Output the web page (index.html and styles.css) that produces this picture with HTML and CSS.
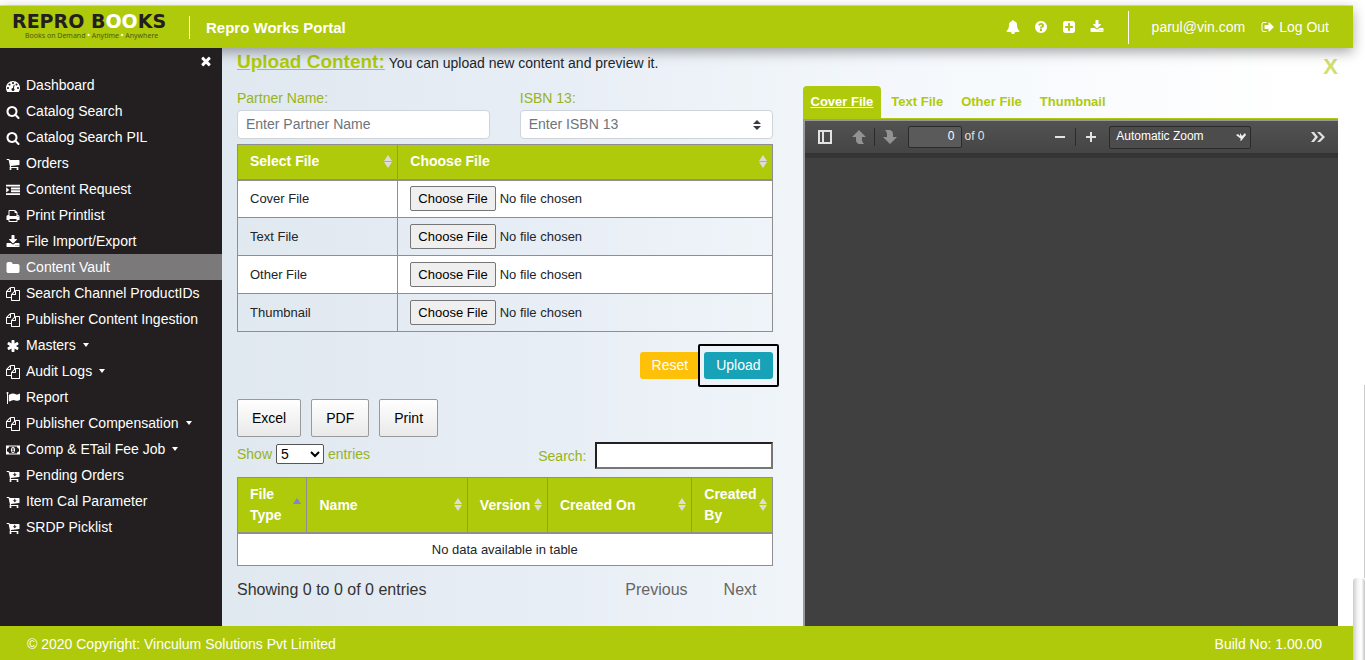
FILE: index.html
```html
<!DOCTYPE html>
<html lang="en">
<head>
<meta charset="UTF-8" />
<meta name="viewport" content="width=device-width, initial-scale=1" />
<title>Repro Works Portal</title>
<link rel="stylesheet" href="styles.css">
</head>
<body>
<svg class="sprite" aria-hidden="true">
  <symbol id="bell" viewBox="0 0 1792 1792"><path d="M1728 1408q0 52-38 90t-90 38h-448q0 106-75 181t-181 75-181-75-75-181h-448q-52 0-90-38t-38-90q50-42 91-88t85-119.500 74.500-158.500 50-206 19.500-260q0-152 117-282.500t307-158.500q-8-19-8-39 0-40 28-68t68-28 68 28 28 68q0 20-8 39 190 28 307 158.500t117 282.500q0 139 19.500 260t50 206 74.500 158.500 85 119.500 91 88z"/></symbol>
  <symbol id="question" viewBox="0 0 1792 1792"><path d="M1024 1376v-192q0-14-9-23t-23-9h-192q-14 0-23 9t-9 23v192q0 14 9 23t23 9h192q14 0 23-9t9-23zm256-672q0-88-55.500-163t-138.500-116-170-41q-243 0-371 213-15 24 8 42l132 100q7 6 19 6 16 0 25-12 53-68 86-92 34-24 86-24 48 0 85.500 26t37.500 59q0 38-20 61t-68 45q-63 28-115.500 86.500t-52.500 125.500v36q0 14 9 23t23 9h192q14 0 23-9t9-23q0-19 21.500-49.500t54.500-49.500q32-18 49-28.500t46-35 44.500-48 28-60.500 12.500-81zm384 192q0 209-103 385.500t-279.500 279.500-385.500 103-385.500-103-279.500-279.500-103-385.500 103-385.500 279.500-279.500 385.500-103 385.500 103 279.500 279.500 103 385.500z"/></symbol>
  <symbol id="plus" viewBox="0 0 1792 1792"><path d="M1408 960v-128q0-26-19-45t-45-19h-320v-320q0-26-19-45t-45-19h-128q-26 0-45 19t-19 45v320h-320q-26 0-45 19t-19 45v128q0 26 19 45t45 19h320v320q0 26 19 45t45 19h128q26 0 45-19t19-45v-320h320q26 0 45-19t19-45zm256-544v960q0 119-84.500 203.500t-203.500 84.500h-960q-119 0-203.500-84.500t-84.500-203.500v-960q0-119 84.500-203.500t203.500-84.500h960q119 0 203.500 84.500t84.500 203.500z"/></symbol>
  <symbol id="download" viewBox="0 0 1792 1792"><path d="M1344 1344q0-26-19-45t-45-19-45 19-19 45 19 45 45 19 45-19 19-45zm256 0q0-26-19-45t-45-19-45 19-19 45 19 45 45 19 45-19 19-45zm128-224v320q0 40-28 68t-68 28h-1472q-40 0-68-28t-28-68v-320q0-40 28-68t68-28h465l135 136q58 56 136 56t136-56l136-136h464q40 0 68 28t28 68zm-325-569q17 41-14 70l-448 448q-18 19-45 19t-45-19l-448-448q-31-29-14-70 17-39 59-39h256v-448q0-26 19-45t45-19h256q26 0 45 19t19 45v448h256q42 0 59 39z"/></symbol>
  <symbol id="signout" viewBox="0 0 1792 1792"><path d="M704 1440q0 4 1 20t.5 26.500-3 23.500-10 19.500-20.500 6.500h-320q-119 0-203.500-84.500t-84.500-203.500v-704q0-119 84.500-203.500t203.500-84.500h320q13 0 22.500 9.500t9.500 22.500q0 4 1 20t.5 26.500-3 23.500-10 19.500-20.500 6.500h-320q-66 0-113 47t-47 113v704q0 66 47 113t113 47h312l11.500 1 11.500 3 8 5.500 7 9 2 13.500zm928-544q0 26-19 45l-544 544q-19 19-45 19t-45-19-19-45v-288h-448q-26 0-45-19t-19-45v-384q0-26 19-45t45-19h448v-288q0-26 19-45t45-19 45 19l544 544q19 19 19 45z"/></symbol>
  <symbol id="times" viewBox="0 0 1792 1792"><path d="M1490 1322q0 40-28 68l-136 136q-28 28-68 28t-68-28l-294-294-294 294q-28 28-68 28t-68-28l-136-136q-28-28-28-68t28-68l294-294-294-294q-28-28-28-68t28-68l136-136q28-28 68-28t68 28l294 294 294-294q28-28 68-28t68 28l136 136q28 28 28 68t-28 68l-294 294 294 294q28 28 28 68z"/></symbol>
  <symbol id="dashboard" viewBox="0 0 1792 1792"><path d="M384 1152q0-53-37.500-90.500t-90.500-37.500-90.500 37.500-37.500 90.500 37.500 90.500 90.500 37.500 90.500-37.500 37.500-90.500zm192-448q0-53-37.500-90.500t-90.500-37.500-90.500 37.500-37.500 90.500 37.500 90.500 90.500 37.500 90.500-37.500 37.500-90.500zm428 481l101-382q6-26-7.500-48.500t-38.500-29.500-48 6.500-30 39.500l-101 382q-60 5-107 43.500t-63 98.500q-20 77 20 146t117 89 146-20 89-117q16-60-6-117t-72-91zm660-33q0-53-37.500-90.500t-90.500-37.500-90.500 37.500-37.500 90.500 37.500 90.500 90.500 37.500 90.500-37.500 37.500-90.500zm-640-640q0-53-37.500-90.500t-90.500-37.500-90.500 37.500-37.500 90.500 37.500 90.500 90.500 37.500 90.500-37.500 37.500-90.500zm448 192q0-53-37.500-90.500t-90.500-37.500-90.500 37.500-37.500 90.500 37.500 90.500 90.500 37.500 90.500-37.500 37.500-90.500zm320 448q0 261-141 483-19 29-54 29h-1402q-35 0-54-29-141-221-141-483 0-182 71-348t191-286 286-191 348-71 348 71 286 191 191 286 71 348z"/></symbol>
  <symbol id="search" viewBox="0 0 1792 1792"><path d="M1216 832q0-185-131.500-316.500t-316.500-131.500-316.500 131.500-131.500 316.500 131.500 316.500 316.500 131.500 316.500-131.500 131.500-316.500zm512 832q0 52-38 90t-90 38q-54 0-90-38l-343-342q-179 124-399 124-143 0-273.500-55.500t-225-150-150-225-55.500-273.500 55.500-273.500 150-225 225-150 273.500-55.500 273.500 55.500 225 150 150 225 55.500 273.500q0 220-124 399l343 343q37 37 37 90z"/></symbol>
  <symbol id="cart" viewBox="0 0 1792 1792"><path d="M704 1536q0 52-38 90t-90 38-90-38-38-90 38-90 90-38 90 38 38 90zm896 0q0 52-38 90t-90 38-90-38-38-90 38-90 90-38 90 38 38 90zm128-1088v512q0 24-16.500 42.500t-40.500 21.500l-1044 122q13 60 13 70 0 16-24 64h920q26 0 45 19t19 45-19 45-45 19h-1024q-26 0-45-19t-19-45q0-11 8-31.500t16-36 21.500-40 15.500-29.500l-177-823h-204q-26 0-45-19t-19-45 19-45 45-19h256q16 0 28.500 6.500t19.500 15.500 13 24.500 8 26 5.500 29.500 4.500 26h1201q26 0 45 19t19 45z"/></symbol>
  <symbol id="cart-down" viewBox="0 0 1792 1792"><path fill-rule="evenodd" d="M704 1536q0 52-38 90t-90 38-90-38-38-90 38-90 90-38 90 38 38 90zm896 0q0 52-38 90t-90 38-90-38-38-90 38-90 90-38 90 38 38 90zm128-1088v512q0 24-16.500 42.500t-40.500 21.500l-1044 122q13 60 13 70 0 16-24 64h920q26 0 45 19t19 45-19 45-45 19h-1024q-26 0-45-19t-19-45q0-11 8-31.500t16-36 21.500-40 15.500-29.500l-177-823h-204q-26 0-45-19t-19-45 19-45 45-19h256q16 0 28.500 6.500t19.500 15.500 13 24.500 8 26 5.500 29.500 4.500 26h1201q26 0 45 19t19 45zM1060 470v190h-190l254 254 254-254h-190v-190z"/></symbol>
  <symbol id="indent" viewBox="0 0 1792 1792"><path d="M0 220h1792v240h-1792zM640 580h1152v240h-1152zM640 940h1152v240h-1152zM0 1300h1792v240h-1792zM20 540l400 340-400 340z"/></symbol>
  <symbol id="print" viewBox="0 0 1792 1792"><path d="M448 1536h896v-256h-896v256zm0-640h896v-384h-160q-40 0-68-28t-28-68v-160h-640v640zm1152 64q0-26-19-45t-45-19-45 19-19 45 19 45 45 19 45-19 19-45zm128 0v416q0 13-9.500 22.500t-22.500 9.500h-224v160q0 40-28 68t-68 28h-960q-40 0-68-28t-28-68v-160h-224q-13 0-22.500-9.500t-9.500-22.500v-416q0-79 56.500-135.500t135.500-56.500h64v-544q0-40 28-68t68-28h672q40 0 88 20t76 48l152 152q28 28 48 76t20 88v256h64q79 0 135.500 56.500t56.500 135.500z"/></symbol>
  <symbol id="folder" viewBox="0 0 1792 1792"><path d="M1728 608v704q0 92-66 158t-158 66h-1216q-92 0-158-66t-66-158v-960q0-92 66-158t158-66h320q92 0 158 66t66 158v32h672q92 0 158 66t66 158z"/></symbol>
  <symbol id="files" viewBox="0 0 1792 1792"><path d="M1696 384q40 0 68 28t28 68v1216q0 40-28 68t-68 28h-960q-40 0-68-28t-28-68v-288h-544q-40 0-68-28t-28-68v-672q0-40 20-88t48-76l408-408q28-28 76-48t88-20h416q40 0 68 28t28 68v328q68-40 128-40h416zm-544 213l-299 299h299v-299zm-640-384l-299 299h299v-299zm196 647l316-316v-416h-384v416q0 40-28 68t-68 28h-416v640h512v-256q0-40 20-88t48-76zm956 804v-1152h-384v416q0 40-28 68t-68 28h-416v640h896z"/></symbol>
  <symbol id="asterisk" viewBox="0 0 1792 1792"><path d="M1546 1050q46 26 59.500 77.500t-12.500 97.500l-64 110q-26 46-77.500 59.500t-97.500-12.500l-266-153v307q0 52-38 90t-90 38h-128q-52 0-90-38t-38-90v-307l-266 153q-46 26-97.500 12.500t-77.500-59.500l-64-110q-26-46-12.500-97.500t59.500-77.500l266-154-266-154q-46-26-59.500-77.500t12.500-97.500l64-110q26-46 77.500-59.500t97.500 12.500l266 153v-307q0-52 38-90t90-38h128q52 0 90 38t38 90v307l266-153q46-26 97.500-12.500t77.500 59.500l64 110q26 46 12.500 97.500t-59.500 77.500l-266 154z"/></symbol>
  <symbol id="flag" viewBox="0 0 1792 1792"><path d="M320 256q0 72-64 110v1266q0 13-9 22t-23 10h-64q-14 0-23-10t-9-22v-1266q-64-38-64-110 0-53 38-90t90-38 90 38 38 90zM1792 320v763q0 25-13 38t-46 31q-200 108-345 108-80 0-200-60t-200-60q-215 0-540 195-14 9-32 9-64-7-64-64v-742q0-32 31-55 21-14 79-43 236-120 421-120 107 0 200 29t219 88q38 19 88 19 90 0 300-117 30-16 38-16 64 7 64 64z"/></symbol>
  <symbol id="money" viewBox="0 0 1792 1792"><path fill-rule="evenodd" d="M0 320h1792v1152h-1792zM384 448q0 106-75 181t-181 75v384q106 0 181 75t75 181h1024q0-106 75-181t181-75v-384q-106 0-181-75t-75-181zM896 512q256 0 256 384t-256 384-256-384 256-384zM770 760v80h70v190h-90v80h300v-80h-90v-380h-90z"/></symbol>
</svg>

<div class="window">
<div class="app">
  <header class="topbar">
    <div class="logo">
      <div class="logo-name">REPRO B<span>OO</span>KS</div>
      <div class="logo-tag">Books on Demand <b>•</b> Anytime <b>•</b> Anywhere</div>
    </div>
    <div class="portal-title">Repro Works Portal</div>
    <div class="top-icons">
      <a href="#" aria-label="Notifications"><svg><use href="#bell"/></svg></a>
      <a href="#" aria-label="Help"><svg><use href="#question"/></svg></a>
      <a href="#" aria-label="Add"><svg><use href="#plus"/></svg></a>
      <a href="#" aria-label="Downloads"><svg><use href="#download"/></svg></a>
    </div>
    <div class="user">
      <a href="#">parul@vin.com</a>
      <a href="#"><svg><use href="#signout"/></svg> Log Out</a>
    </div>
  </header>

  <div class="middle">
    <nav class="sidebar">
      <button class="close-nav" aria-label="Close menu"><svg><use href="#times"/></svg></button>
      <a href="#"><svg><use href="#dashboard"/></svg>Dashboard</a>
      <a href="#"><svg><use href="#search"/></svg>Catalog Search</a>
      <a href="#"><svg><use href="#search"/></svg>Catalog Search PIL</a>
      <a href="#"><svg><use href="#cart"/></svg>Orders</a>
      <a href="#"><svg><use href="#indent"/></svg>Content Request</a>
      <a href="#"><svg><use href="#print"/></svg>Print Printlist</a>
      <a href="#"><svg><use href="#download"/></svg>File Import/Export</a>
      <a href="#" class="active"><svg><use href="#folder"/></svg>Content Vault</a>
      <a href="#"><svg><use href="#files"/></svg>Search Channel ProductIDs</a>
      <a href="#"><svg><use href="#files"/></svg>Publisher Content Ingestion</a>
      <a href="#" class="drop"><svg><use href="#asterisk"/></svg>Masters</a>
      <a href="#" class="drop"><svg><use href="#files"/></svg>Audit Logs</a>
      <a href="#"><svg><use href="#flag"/></svg>Report</a>
      <a href="#" class="drop"><svg><use href="#files"/></svg>Publisher Compensation</a>
      <a href="#" class="drop"><svg><use href="#money"/></svg>Comp &amp; ETail Fee Job</a>
      <a href="#"><svg><use href="#cart-down"/></svg>Pending Orders</a>
      <a href="#"><svg><use href="#cart-down"/></svg>Item Cal Parameter</a>
      <a href="#"><svg><use href="#cart-down"/></svg>SRDP Picklist</a>
    </nav>

    <main class="content">
      <div class="page-head">
        <h1>Upload Content:</h1>
        <p>You can upload new content and preview it.</p>
        <button class="close-page">X</button>
      </div>

      <div class="columns">
        <section class="upload">
          <div class="fields">
            <div class="field">
              <label for="partner">Partner Name:</label>
              <input type="text" id="partner" placeholder="Enter Partner Name" />
            </div>
            <div class="field">
              <label for="isbn">ISBN 13:</label>
              <select id="isbn"><option>Enter ISBN 13</option></select>
            </div>
          </div>

          <table class="grid files">
            <thead>
              <tr><th class="col-select sort">Select File</th><th class="sort">Choose File</th></tr>
            </thead>
            <tbody>
              <tr><td><label for="f1">Cover File</label></td><td><input type="file" id="f1" /></td></tr>
              <tr><td><label for="f2">Text File</label></td><td><input type="file" id="f2" /></td></tr>
              <tr><td><label for="f3">Other File</label></td><td><input type="file" id="f3" /></td></tr>
              <tr><td><label for="f4">Thumbnail</label></td><td><input type="file" id="f4" /></td></tr>
            </tbody>
          </table>

          <div class="actions">
            <button class="btn reset">Reset</button>
            <button class="btn send">Upload</button>
          </div>

          <div class="exports">
            <button>Excel</button>
            <button>PDF</button>
            <button>Print</button>
          </div>

          <div class="table-tools">
            <div class="length">
              <label for="len">Show</label>
              <select id="len"><option>5</option></select>
              <span>entries</span>
            </div>
            <div class="filter">
              <label for="filter">Search:</label>
              <input type="search" id="filter" />
            </div>
          </div>

          <table class="grid history">
            <thead>
              <tr>
                <th class="col-type sort asc">File Type</th>
                <th class="col-name sort">Name</th>
                <th class="col-version sort">Version</th>
                <th class="col-on sort">Created On</th>
                <th class="col-by sort">Created By</th>
              </tr>
            </thead>
            <tbody>
              <tr><td colspan="5">No data available in table</td></tr>
            </tbody>
          </table>

          <div class="pager">
            <div>Showing 0 to 0 of 0 entries</div>
            <div class="pages"><a href="#">Previous</a><a href="#">Next</a></div>
          </div>
        </section>

        <section class="preview">
          <div class="tabs">
            <a href="#" class="active">Cover File</a>
            <a href="#">Text File</a>
            <a href="#">Other File</a>
            <a href="#">Thumbnail</a>
          </div>
          <div class="viewer">
            <div class="viewer-bar">
              <div class="bar-left">
                <button aria-label="Toggle sidebar"><svg viewBox="0 0 16 16"><path fill-rule="evenodd" d="M1 1h14v14H1zM3 3v10h2V3zM7 3v10h6V3z"/></svg></button>
                <button class="off" aria-label="Previous page"><svg viewBox="0 0 16 16"><path d="M8 1l7 7h-4v3q0 2 2 4H8q-3-1-3-4V8H1z"/></svg></button>
                <i class="sep"></i>
                <button class="off" aria-label="Next page"><svg viewBox="0 0 16 16"><path d="M8 15L1 8h4V5q0-2-2-4h5q3 1 3 4v3h4z"/></svg></button>
                <input type="text" class="page-no" value="0" aria-label="Page" />
                <span>of 0</span>
              </div>
              <div class="bar-mid">
                <button aria-label="Zoom out"><svg viewBox="0 0 16 16"><path d="M3 7h10v2H3z"/></svg></button>
                <i class="sep"></i>
                <button aria-label="Zoom in"><svg viewBox="0 0 16 16"><path d="M3 7h4V3h2v4h4v2H9v4H7V9H3z"/></svg></button>
                <select class="zoom" aria-label="Zoom"><option>Automatic Zoom</option></select>
              </div>
              <button aria-label="Tools"><svg viewBox="0 0 16 16"><path d="M1 3h3l4 5-4 5H1l4-5zM7 3h3l5 5-5 5H7l5-5z"/></svg></button>
            </div>
          </div>
        </section>
      </div>
    </main>
  </div>

  <footer class="footer">
    <span>© 2020 Copyright: Vinculum Solutions Pvt Limited</span>
    <span>Build No: 1.00.00</span>
  </footer>
</div>
<div class="rail"><div class="rail-line"></div><div class="rail-thumb"></div></div>
</div>
</body>
</html>
```

FILE: styles.css
```css
* { box-sizing: border-box; }
body { margin: 0; background: #fff; color: #212529; font-family: "Liberation Sans", Arial, sans-serif; font-size: 14px; }
button, input, select { font-family: inherit; margin: 0; }
a { text-decoration: none; }
svg { fill: currentColor; width: 14px; height: 14px; flex: none; }
.sprite { position: absolute; width: 0; height: 0; }

.window { display: flex; height: 100vh; padding-top: 5px; overflow: hidden; }
.app { flex: 1; display: flex; flex-direction: column; min-width: 0; border-top: 1px solid #dcdde2; }

/* top bar */
.topbar { height: 42px; flex: none; display: flex; align-items: center; background: #afca0b; color: #fff; position: relative; z-index: 2; box-shadow: 0 4px 12px rgba(0,0,0,.35); }
.topbar a { color: #fff; display: flex; align-items: center; gap: 4px; }
.logo { width: 189px; padding: 0 0 2px 12px; color: #231f20; }
.logo-name { font: bold 19px/20px "DejaVu Sans", sans-serif; white-space: nowrap; }
.logo-name span { color: #fff; }
.logo-tag { font: 7px/10px "Noto Sans", sans-serif; padding-left: 13px; color: #4c5a12; white-space: nowrap; }
.logo-tag b { color: #fff; }
.portal-title { padding-left: 16px; border-left: 1px solid #fff; font-size: 15px; line-height: 23px; font-weight: bold; }
.top-icons { display: flex; gap: 14px; margin-left: auto; padding-right: 24px; }
.user { display: flex; align-items: center; gap: 16px; height: 33px; padding: 0 24px 0 23px; border-left: 1px solid #fff; }

/* sidebar */
.middle { flex: 1; display: flex; min-height: 0; }
.sidebar { width: 222px; flex: none; background: #231f20; z-index: 3; }
.sidebar a { display: flex; align-items: center; gap: 6px; height: 26px; padding-left: 6px; color: #fff; }
.sidebar a svg { margin-top: 2px; }
.sidebar a.active { background: #7b7979; }
.sidebar a.drop::after { content: ""; margin-left: 1px; border: 3px solid transparent; border-top: 4px solid #fff; border-bottom: 0; }
.close-nav { display: block; margin-left: auto; height: 24px; padding: 4px 9px 0 0; background: none; border: none; color: #fff; }

/* content */
.content { flex: 1; min-width: 0; display: flex; flex-direction: column; padding: 0 15px; background: linear-gradient(to right, #e0e8f0, #e8eef5 30%, #f4f8fc 60%, #fff 95%); }
.page-head { display: flex; align-items: flex-start; height: 38px; flex: none; }
.page-head h1 { margin: 0; font-size: 19px; line-height: 28px; color: #afca0b; text-decoration: underline; }
.page-head p { margin: 0; padding-left: 4px; line-height: 30px; }
.close-page { margin-left: auto; padding: 0; background: none; border: none; font-size: 22px; font-weight: bold; line-height: 38px; color: #d0df6d; }
.columns { flex: 1; min-height: 0; display: grid; grid-template-columns: 1fr 1fr; gap: 30px; }
.upload { padding-top: 2px; }
label, .length { color: #98b31c; }
.fields { display: grid; grid-template-columns: 1fr 1fr; gap: 30px; margin-bottom: 5px; }
.field label { display: block; line-height: 20px; margin-bottom: 2px; }
.field input, .field select { display: block; width: 100%; height: 29px; padding: 0 8px 1px; border: 1px solid #ced4da; border-radius: 4px; background-color: #fff; color: #6c757d; font-size: 14px; }
.field input::placeholder { color: #6c757d; }
.field select { appearance: none; background: #fff url("data:image/svg+xml,%3Csvg xmlns='http://www.w3.org/2000/svg' viewBox='0 0 4 5'%3E%3Cpath fill='%23343a40' d='M2 0L0 2h4zm0 5L0 3h4z'/%3E%3C/svg%3E") no-repeat right 11px center / 8px 10px; }

/* tables */
.grid { width: 100%; border-collapse: collapse; table-layout: fixed; font-size: 13px; }
.grid th, .grid td { border: 1px solid #8e8e93; }
.grid th { position: relative; padding: 6px 12px; background: #afca0b; color: #fff; font-size: 14px; line-height: 21px; text-align: left; border-bottom-width: 2px; }
.grid td { padding: 0 12px; }
.grid tbody tr:nth-child(odd) { background: #fff; }
.grid td label { color: #212529; }
.files th { height: 35px; }
.files td { height: 38px; }
.col-select { width: 30%; }
.files input { display: block; width: 100%; font-size: 13px; }
.files input::file-selector-button { height: 25px; padding: 0 7px; margin-right: 4px; border: 1px solid #767676; border-radius: 2px; background: #efefef; color: #000; font: 13px "Liberation Sans", Arial, sans-serif; }
.sort::before, .sort::after { content: ""; position: absolute; right: 5px; border: 4px solid transparent; }
.sort::before { bottom: 50%; border-bottom: 6px solid #dcdcdc; border-top: 0; margin-bottom: 1px; }
.sort::after { top: 50%; border-top: 6px solid #dcdcdc; border-bottom: 0; }
.sort.asc::before { border-bottom-color: #8080e0; }
.sort.asc::after { display: none; }

.actions { display: flex; justify-content: flex-end; gap: 4px; margin: 20px 0; }
.btn { height: 27px; padding: 0 12px 1px; border: none; border-radius: 3px; color: #fff; font-size: 14px; }
.reset { background: #ffc107; }
.send { background: #17a2b8; position: relative; }
.send::after { content: ""; position: absolute; inset: -8px -6px; border: 2px solid #000; border-radius: 2px; }

.exports { display: flex; gap: 10px; }
.exports button { height: 38px; padding: 0 14px; border: 1px solid #999; border-radius: 2px; background: linear-gradient(#fff, #e9e9e9); color: #000; font-size: 14px; }
.table-tools { display: flex; justify-content: space-between; margin: 5px 0 8px; }
.length, .filter { display: flex; align-items: center; }
.length { gap: 4px; height: 24px; }
.length select { width: 48px; height: 20px; padding: 0; border: 1px solid #555; border-radius: 2px; background: #fff; color: #000; font-size: 14px; }
.filter { gap: 8px; }
.filter input { width: 178px; height: 27px; border: 2px inset #767676; background: #fff; }
.history th { height: 55px; }
.history td { height: 32px; text-align: center; }
.history .col-type { width: 13%; padding-right: 20px; }
.col-name { width: 30%; }
.col-version { width: 15%; }
.col-on { width: 27%; }
.col-by { width: 15%; }
.pager { display: flex; justify-content: space-between; padding-top: 14px; font-size: 16px; line-height: 20px; color: #333; }
.pages { display: flex; gap: 36px; padding-right: 16px; }
.pages a { color: #666; }

/* preview */
.preview { display: flex; flex-direction: column; min-height: 0; }
.tabs { display: flex; gap: 2px; border-bottom: 1px solid #afca0b; font-size: 13px; font-weight: bold; }
.tabs a { padding: 0 8px; line-height: 32px; color: #afca0b; }
.tabs a.active { background: #afca0b; color: #fff; border-radius: 4px 4px 0 0; text-decoration: underline; }
.viewer { flex: 1; border: 2px solid #999; border-width: 2px 0 0 2px; background: #404040; }
.viewer-bar { display: flex; justify-content: space-between; align-items: center; height: 32px; padding: 0 12px; background: linear-gradient(#525252, #454545); box-shadow: 0 1px 0 #333, 0 5px 0 #353535; color: #e3e3e3; font-size: 12px; }
.viewer-bar button { display: flex; padding: 0; border: none; background: none; color: #e3e3e3; }
.viewer-bar svg { width: 16px; height: 16px; }
.viewer-bar button.off { color: #929292; }
.bar-left, .bar-mid { display: flex; align-items: center; gap: 7px; }
.bar-left button:first-child { margin-right: 11px; }
.sep { width: 1px; height: 18px; background: #2b2b2b; }
.page-no { width: 54px; height: 22px; margin-left: 3px; border: 1px solid #2a2a2a; border-radius: 2px; background: #5a5a5a; color: #fff; font-size: 12px; text-align: right; padding: 0 6px 2px; }
.page-no + span { margin-left: -4px; padding-bottom: 2px; }
.bar-mid { margin-left: 9px; }
.zoom { appearance: none; width: 142px; height: 23px; margin-left: 3px; padding: 0 6px 2px; border: 1px solid #2a2a2a; border-radius: 2px; background: #4c4c4c url("data:image/svg+xml,%3Csvg xmlns='http://www.w3.org/2000/svg' viewBox='0 0 10 8'%3E%3Cpath fill='%23eee' d='M0 2l2-1 2 2V0l2 3 3-3 1 2-5 6-1-1 1-1z'/%3E%3C/svg%3E") no-repeat right 4px center / 10px 8px; color: #fff; font-size: 12px; }

.footer { height: 34px; flex: none; display: flex; align-items: center; justify-content: space-between; padding: 2px 31px 0 27px; background: #afca0b; color: #fff; z-index: 3; }

/* window scrollbar */
.rail { width: 12px; flex: none; display: flex; flex-direction: column; justify-content: flex-end; }
.rail-line { height: 193px; border-right: 1px solid #ccc; }
.rail-thumb { height: 82px; border-radius: 4px 4px 0 0; background: linear-gradient(to right, #ccc, #f5f5f5 40%, #fff 70%, #c4c4c4); }
```
